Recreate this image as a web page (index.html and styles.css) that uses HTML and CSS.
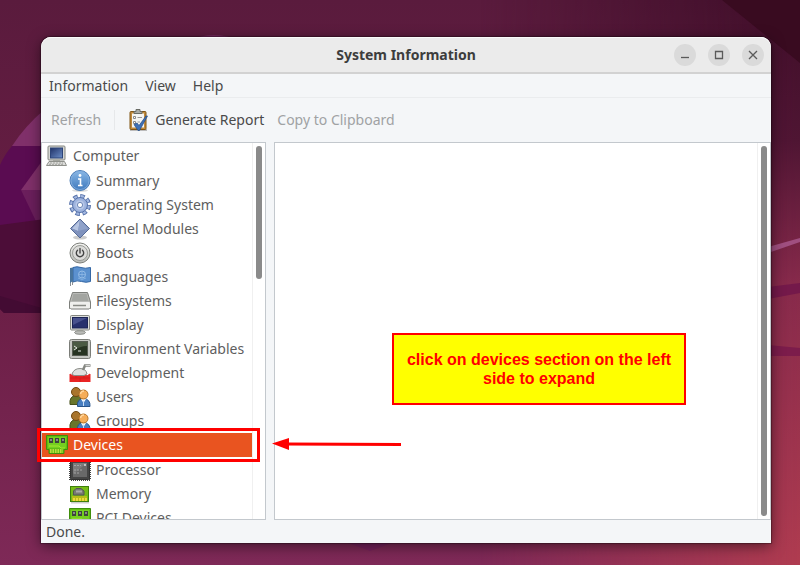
FILE: index.html
```html
<!DOCTYPE html>
<html lang="en">
<head>
  <meta charset="UTF-8">
  <meta name="viewport" content="width=device-width, initial-scale=1.0">
  <title>System Information</title>
  <link rel="stylesheet" href="styles.css">
</head>
<body>

  <!-- Wallpaper -->
  <svg class="wallpaper" viewBox="0 0 800 565" preserveAspectRatio="none" aria-hidden="true">
    <defs>
      <linearGradient id="wall" x1="0" y1="0" x2="0" y2="1">
        <stop offset="0" stop-color="#5a1b3d"/>
        <stop offset=".5" stop-color="#6a1e45"/>
        <stop offset="1" stop-color="#7e2957"/>
      </linearGradient>
      <linearGradient id="wallRight" x1="0" y1="0" x2="0" y2="1">
        <stop offset="0" stop-color="#3f0e29"/>
        <stop offset=".25" stop-color="#4f1533"/>
        <stop offset=".5" stop-color="#872a4b"/>
        <stop offset="1" stop-color="#b03c50"/>
      </linearGradient>
      <linearGradient id="fade">
        <stop offset=".6" stop-color="#fff" stop-opacity="0"/>
        <stop offset="1" stop-color="#fff"/>
      </linearGradient>
      <mask id="fadeMask"><rect width="800" height="565" fill="url(#fade)"/></mask>
    </defs>
    <rect width="800" height="565" fill="url(#wall)"/>
    <rect width="800" height="565" fill="url(#wallRight)" mask="url(#fadeMask)"/>
    <path d="M722 0L800 63V0z" fill="#390b20"/>
    <path d="M0 165Q5 154 12 146H60V240L0 226z" fill="#5a0c51"/>
    <path d="M12 146Q25 126 45 109V146z" fill="#80306a"/>
    <path d="M21 190L45 157V190z" fill="#80306a"/>
    <path d="M21 190H45V240z" fill="#6b1f5c"/>
    <path d="M0 225L45 219V313H4L0 309z" fill="#4c0d38"/>
    <path d="M0 296L45 309V313H4L0 309z" fill="#430b33"/>
    <path d="M190 40Q214 30 238 40z" fill="#75285e"/>
    <path d="M340 540L370 551L400 540z" fill="#76215c"/>
    <path d="M768 247L800 238V242L768 253z" fill="#a04f80"/>
    <path d="M768 287L800 283V293L768 299z" fill="#74194a"/>
    <path d="M768 345L800 348V356H768z" fill="#7c1c4b"/>
  </svg>

  <!-- Shared icons -->
  <svg class="sprite" aria-hidden="true">
    <defs>
      <linearGradient id="blue" x1="0" y1="0" x2="0" y2="1">
        <stop offset="0" stop-color="#8ab8e6"/><stop offset="1" stop-color="#3d78bd"/>
      </linearGradient>
      <linearGradient id="screen" x1="0" y1="0" x2="1" y2="1">
        <stop offset="0" stop-color="#203268"/><stop offset="1" stop-color="#6d8fc8"/>
      </linearGradient>
      <linearGradient id="silver" x1="0" y1="0" x2="0" y2="1">
        <stop offset="0" stop-color="#f5f5f3"/><stop offset="1" stop-color="#b6b8b3"/>
      </linearGradient>
    </defs>
    <symbol id="i-computer" viewBox="0 0 22 22">
      <rect x="2" y="1" width="17" height="14" rx="1" fill="#d5d6d2" stroke="#858781"/>
      <rect x="4.500" y="3" width="12" height="10" fill="url(#screen)" stroke="#2d4478"/>
      <path d="M7 15H14V17H7z" fill="#a4a6a0"/>
      <path d="M3 16.500H18.500L20.500 20.500H.500z" fill="#dcdcda" stroke="#8f918c"/>
      <path d="M4 18H17M3 19.300H18" stroke="#a4a6a0" stroke-dasharray="2 1"/>
    </symbol>
    <symbol id="i-summary" viewBox="0 0 22 22">
      <ellipse cx="11" cy="20.500" rx="8" ry="1.500" fill="#ddd"/>
      <circle cx="11" cy="10.500" r="10" fill="url(#blue)" stroke="#4a7db8"/>
      <circle cx="11" cy="10.500" r="9" fill="none" stroke="#86b0de" stroke-width=".8"/>
      <circle cx="11" cy="5.500" r="1.400" fill="#fff"/>
      <path d="M9 9H11.500V15.500M9 15.500H13.500" fill="none" stroke="#fff" stroke-width="1.600"/>
    </symbol>
    <symbol id="i-os" viewBox="0 0 22 22">
      <circle cx="11" cy="11" r="9" fill="none" stroke="#5873ab" stroke-width="4" stroke-dasharray="4.400 2.669"/>
      <circle cx="11" cy="11" r="8.500" fill="none" stroke="#a3b8e0" stroke-width="3" stroke-dasharray="2.700 3.976" stroke-dashoffset="-.700"/>
      <circle cx="11" cy="11" r="7.500" fill="#93abd8" stroke="#5873ab"/>
      <circle cx="11" cy="11" r="6.500" fill="#9fb4de"/>
      <circle cx="11" cy="11" r="4.500" fill="#b9c9e9"/>
      <circle cx="11" cy="11" r="2.600" fill="#fff" stroke="#6f88b8"/>
    </symbol>
    <symbol id="i-kernel" viewBox="0 0 22 22">
      <ellipse cx="11" cy="19.500" rx="7" ry="2" fill="#ccc"/>
      <path d="M11 1L20.500 10.500L11 20L1.500 10.500z" fill="#7f92bd" stroke="#566b97"/>
      <path d="M11 2L3 10.500L9 13z" fill="#b8c6e2"/>
      <path d="M11 2L9 13L19 10.500z" fill="#8fa2ca"/>
      <path d="M3 10.500L9 13L11 19z" fill="#8193bd"/>
    </symbol>
    <symbol id="i-boots" viewBox="0 0 22 22">
      <circle cx="11" cy="11" r="10" fill="url(#silver)" stroke="#7e807b"/>
      <circle cx="11" cy="11" r="7.500" fill="#dcdcda" stroke="#989a95"/>
      <path d="M8.500 8.300A3.700 3.700 0 1 0 13.500 8.300M11 6.500V11" fill="none" stroke="#444" stroke-width="1.400" stroke-linecap="round"/>
    </symbol>
    <symbol id="i-languages" viewBox="0 0 22 22">
      <path d="M1.500 2V20M3.500 2V19" stroke="#8b8f94"/>
      <path d="M4 1.500Q8 0 12 1.500T21.500 1.500V15.500Q17 17 12.500 15.500T4 16z" fill="#5b91cf" stroke="#3467a5"/>
      <path d="M1 2L4 1.500V15L1 17z" fill="#48759e"/>
      <circle cx="13" cy="8.500" r="3.500" fill="none" stroke="#94bce6"/>
      <path d="M9.500 8.500H16.500M13 5V12M9 12Q13 15 17 12" fill="none" stroke="#94bce6" stroke-width=".7"/>
    </symbol>
    <symbol id="i-files" viewBox="0 0 22 22">
      <path d="M3.500 2.500H18.500L21.500 12V18.500H.500V12z" fill="#b9bab7" stroke="#7d7f7b" stroke-linejoin="round"/>
      <path d="M4.500 4H17.500L19.500 11H2.500z" fill="#a3a5a1"/>
      <rect x="1" y="12" width="20" height="6.500" rx="1" fill="#efefed"/>
      <path d="M4 15.500H17" stroke="#898b86" stroke-width="1.500"/>
      <path d="M2 19.500H20" stroke="#bbb"/>
    </symbol>
    <symbol id="i-display" viewBox="0 0 22 22">
      <ellipse cx="11" cy="18.500" rx="5.500" ry="1.800" fill="#babbb8" stroke="#8b8d88"/>
      <path d="M8 15H14V18H8z" fill="#aaaca7"/>
      <rect x="1.500" y="1.500" width="19" height="14.500" rx="1" fill="#dddedb" stroke="#858781"/>
      <rect x="3.500" y="3.500" width="15" height="10.500" fill="#27306d" stroke="#1c2455"/>
      <path d="M4 4H18L4 11z" fill="#48518d"/>
    </symbol>
    <symbol id="i-env" viewBox="0 0 22 22">
      <rect x=".500" y="1.500" width="21" height="19" rx="2" fill="#c5c7c2" stroke="#7b7d78"/>
      <rect x="3.500" y="3.500" width="15" height="14" fill="#273422" stroke="#555b51"/>
      <path d="M4 4H18V8Q11 8 4 13z" fill="#4a5a43"/>
      <path d="M5 8L8 10L5 12M9 13H12" fill="none" stroke="#e4e8e2"/>
    </symbol>
    <symbol id="i-dev" viewBox="0 0 22 22">
      <path d="M.500 12H21.500V20H.500z" fill="#e92424"/>
      <path d="M1 16H21M7 12V16M15 12V16M11 16V20" stroke="#d51c1c"/>
      <path d="M1 12L4 14L7 12H15L18 14L21 12" fill="#fff" stroke="#e02424"/>
      <path d="M3 12Q5 6.500 11 6.500T18 12L15 13.500H5z" fill="#dfe0de" stroke="#8b8d88"/>
      <path d="M14 8L16 3.500H21.500" fill="none" stroke="#858782" stroke-width="2.500"/>
      <path d="M16.500 3.500H21" stroke="#d5d6d4"/>
    </symbol>
    <symbol id="i-users" viewBox="0 0 22 22">
      <path d="M1 18.500Q0 10 7 9.500Q13 10 12.500 18.500z" fill="#68752b" stroke="#47501b"/>
      <circle cx="7" cy="6" r="4.500" fill="#a9752c" stroke="#704811"/>
      <path d="M8.500 20.500Q7.500 13 14.500 12.500Q21.500 13 21 20.500z" fill="#487ec0" stroke="#28548a"/>
      <path d="M12 13L14.500 17L17 13z" fill="#fff"/>
      <path d="M14.500 14.500V20" stroke="#c6dcf3"/>
      <circle cx="14.500" cy="8.500" r="4.500" fill="#f5ad59" stroke="#b77426"/>
      <path d="M11.500 8Q12 5 15 5" fill="none" stroke="#ffd59b" stroke-width="1.500"/>
    </symbol>
    <symbol id="i-card" viewBox="0 0 22 22">
      <path d="M.500 1.500H21.500V15.500H18V19.500H3V15.500H.500z" fill="#60bf13" stroke="#3f8f0c"/>
      <path d="M2 3H20V14H2z" fill="#75cf20"/>
      <path d="M3 4H7V9H3zM9 4H13V9H9zM15 4H19V9H15z" fill="#3d443d"/>
      <path d="M4 5H6V7H4zM10 5H12V7H10zM16 5H18V7H16z" fill="#878b87"/>
      <path d="M3 12H13L15 14H19" fill="none" stroke="#a8e92e"/>
      <path d="M4 17H17" stroke="#b8dd3e" stroke-width="4" stroke-dasharray="1.500 1"/>
    </symbol>
    <symbol id="i-cpu" viewBox="0 0 22 22">
      <rect x="1" y="1" width="20" height="20" fill="none" stroke="#444" stroke-width="2" stroke-dasharray="1 1"/>
      <rect x="1.500" y="1.500" width="19" height="19" rx="1" fill="#454545" stroke="#333"/>
      <rect x="4" y="4" width="14" height="14" fill="#696969"/>
      <path d="M4 4H18L4 15z" fill="#7c7c7c"/>
      <path d="M5 6.500H12M5 11H14M5 14H11" stroke="#a5a5a5" stroke-dasharray="2 1"/>
      <circle cx="16" cy="6" r="1" fill="#ddd"/>
    </symbol>
    <symbol id="i-memory" viewBox="0 0 22 22">
      <path d="M2 19.500H20" stroke="#ccc" stroke-width="2"/>
      <rect x="1.500" y="3.500" width="18" height="15" fill="#75bd16" stroke="#3f7f0c"/>
      <path d="M3 13H18V18H3z" fill="#b7bd19"/>
      <path d="M5 15V18M8 15V18M11 15V18M14 15V18M17 15V18" stroke="#ffe348" stroke-width="1.500"/>
      <path d="M4.500 12V8L7 5.500H12L15 8V12z" fill="#777b72" stroke="#555"/>
      <path d="M7 8.500H13" stroke="#aaa" stroke-width="2"/>
    </symbol>
  </svg>

  <main class="window">
    <header class="titlebar">
      <h1>System Information</h1>
      <div class="window-buttons">
        <button type="button" aria-label="Minimize"><svg viewBox="0 0 22 22"><path d="M7 13.500H15"/></svg></button>
        <button type="button" aria-label="Maximize"><svg viewBox="0 0 22 22"><path d="M7.500 7.500H14.500V14.500H7.500z"/></svg></button>
        <button type="button" aria-label="Close"><svg viewBox="0 0 22 22"><path d="M7 7L15 15M15 7L7 15"/></svg></button>
      </div>
    </header>

    <nav class="menubar">
      <button type="button">Information</button>
      <button type="button">View</button>
      <button type="button">Help</button>
    </nav>

    <div class="toolbar">
      <button type="button" disabled>Refresh</button>
      <span class="separator"></span>
      <button type="button">
        <svg class="icon" viewBox="0 0 22 22" aria-hidden="true">
          <path d="M2 21H19" stroke="#bbb" stroke-width="2"/>
          <rect x="2" y="2.500" width="16" height="18" rx="1" fill="#c28b3d" stroke="#805617"/>
          <path d="M4 4.500H16V18.500H4z" fill="#f5f5f3"/>
          <path d="M6 4.500V2.500H8V.500H12V2.500H14V4.500z" fill="#aaaca7" stroke="#686b65"/>
          <path d="M5.500 7.500H7.500V9.500H5.500zM5.500 12.500H7.500V14.500H5.500z" fill="#fff" stroke="#888"/>
          <path d="M9.500 8.500H14M9.500 13H12" stroke="#999"/>
          <path d="M6 15.500L9 14L11 16.500L18 7H19.500L11.500 21.500H10z" fill="#3f70b5" stroke="#224b83" stroke-width=".7"/>
        </svg>
        Generate Report
      </button>
      <button type="button" disabled>Copy to Clipboard</button>
    </div>

    <div class="panes">
      <aside class="pane sidebar">
        <ul class="tree">
          <li>
            <a href="#"><svg class="icon"><use href="#i-computer"/></svg>Computer</a>
            <ul>
              <li><a href="#"><svg class="icon"><use href="#i-summary"/></svg>Summary</a></li>
              <li><a href="#"><svg class="icon"><use href="#i-os"/></svg>Operating System</a></li>
              <li><a href="#"><svg class="icon"><use href="#i-kernel"/></svg>Kernel Modules</a></li>
              <li><a href="#"><svg class="icon"><use href="#i-boots"/></svg>Boots</a></li>
              <li><a href="#"><svg class="icon"><use href="#i-languages"/></svg>Languages</a></li>
              <li><a href="#"><svg class="icon"><use href="#i-files"/></svg>Filesystems</a></li>
              <li><a href="#"><svg class="icon"><use href="#i-display"/></svg>Display</a></li>
              <li><a href="#"><svg class="icon"><use href="#i-env"/></svg>Environment Variables</a></li>
              <li><a href="#"><svg class="icon"><use href="#i-dev"/></svg>Development</a></li>
              <li><a href="#"><svg class="icon"><use href="#i-users"/></svg>Users</a></li>
              <li><a href="#"><svg class="icon"><use href="#i-users"/></svg>Groups</a></li>
            </ul>
          </li>
          <li>
            <a href="#" class="selected"><svg class="icon"><use href="#i-card"/></svg>Devices</a>
            <ul>
              <li><a href="#"><svg class="icon"><use href="#i-cpu"/></svg>Processor</a></li>
              <li><a href="#"><svg class="icon"><use href="#i-memory"/></svg>Memory</a></li>
              <li><a href="#"><svg class="icon"><use href="#i-card"/></svg>PCI Devices</a></li>
            </ul>
          </li>
        </ul>
        <div class="scrollbar"><div class="thumb thumb-short"></div></div>
      </aside>
      <section class="pane details">
        <div class="scrollbar"><div class="thumb"></div></div>
      </section>
    </div>

    <footer class="statusbar">Done.</footer>

    <!-- Annotations over the window -->
    <div class="ring"></div>
    <svg class="arrow" viewBox="0 0 130 12" aria-hidden="true">
      <path d="M14 6L129 6.500" stroke="#f00" stroke-width="3"/>
      <path d="M0 5.500L17 0V12z" fill="#f00"/>
    </svg>
    <p class="callout">click on devices section on the left side to expand</p>
  </main>

</body>
</html>
```

FILE: styles.css
```css
* {
  box-sizing: border-box;
}

body {
  margin: 0;
  height: 100vh;
  padding: 37px 29px 22px 41px;
  display: flex;
  overflow: hidden;
  background: #6a1e45;
  color: #4a4a4a;
  font-family: "Noto Sans", sans-serif;
  font-size: 14px;
  line-height: 20px;
}

button {
  padding: 0;
  border: none;
  background: none;
  color: inherit;
  font: inherit;
}

.wallpaper {
  position: absolute;
  top: 0;
  left: 0;
  z-index: -1;
  width: 100%;
  height: 100%;
}

.sprite {
  position: absolute;
  width: 0;
  height: 0;
}

.icon {
  flex: none;
  width: 22px;
  height: 22px;
}

/* Window */
.window {
  position: relative;
  flex: 1;
  min-width: 0;
  display: flex;
  flex-direction: column;
  border-radius: 10px 10px 0 0;
  background: #f4f6f8;
  box-shadow: 0 0 1px 1px rgba(0, 0, 0, 0.3), 0 3px 14px rgba(0, 0, 0, 0.5);
}

.titlebar {
  display: grid;
  grid-template-columns: 1fr auto 1fr;
  align-items: center;
  height: 37px;
  padding: 0 7px;
  border-bottom: 2px solid #d2d2d2;
  border-radius: 10px 10px 0 0;
  background: #ebebeb;
  box-shadow: inset 0 1px #fafafa;
}

.titlebar h1 {
  grid-column: 2;
  margin: 0;
  color: #3d3d3d;
  font-size: 14px;
  font-weight: bold;
}

.window-buttons {
  justify-self: end;
  display: flex;
  gap: 12px;
}

.window-buttons button {
  width: 22px;
  height: 22px;
  border-radius: 50%;
  background: #dadada;
}

.window-buttons svg {
  display: block;
  fill: none;
  stroke: #5a5a5a;
  stroke-width: 1.3;
}

.menubar {
  display: flex;
  align-items: center;
  gap: 17px;
  height: 24px;
  padding: 0 8px;
  border-bottom: 1px solid #eaecee;
}

.toolbar {
  display: flex;
  align-items: center;
  height: 44px;
  padding: 0 10px;
  gap: 13px;
}

.toolbar button {
  display: flex;
  align-items: center;
  gap: 5px;
}

.toolbar button:disabled {
  color: #a0a2a4;
}

.separator {
  width: 1px;
  height: 20px;
  background: #e6e8ea;
}

/* Panes */
.panes {
  flex: 1;
  min-height: 0;
  display: flex;
  gap: 8px;
}

.pane {
  display: flex;
  overflow: hidden;
  border: 1px solid #c3c8cd;
  background: #fff;
}

.sidebar {
  flex: none;
  width: 225px;
}

.details {
  flex: 1;
  justify-content: flex-end;
}

.scrollbar {
  flex: none;
  width: 13px;
  padding: 3px;
  border-left: 1px solid #f0f0f0;
}

.thumb {
  width: 6px;
  height: 100%;
  border-radius: 3px;
  background: #8a8a8a;
}

.thumb-short {
  height: 36%;
}

.tree,
.tree ul {
  margin: 0;
  padding: 1px 0 0;
  list-style: none;
}

.tree {
  flex: 1;
  min-width: 0;
}

.tree a {
  display: flex;
  align-items: center;
  gap: 5px;
  height: 24px;
  padding-left: 4px;
  color: #5e5e5e;
  text-decoration: none;
  white-space: nowrap;
}

.tree ul a {
  padding-left: 27px;
}

.tree .selected {
  background: #e95420;
  color: #fff;
}

.statusbar {
  height: 23px;
  padding: 2px 5px;
}

/* Annotations */
.ring {
  position: absolute;
  top: 391px;
  left: -4px;
  width: 223px;
  height: 34px;
  border: 3px solid #f00;
}

.arrow {
  position: absolute;
  top: 401px;
  left: 231px;
  width: 130px;
  height: 12px;
}

.callout {
  position: absolute;
  top: 296px;
  left: 351px;
  width: 294px;
  height: 72px;
  margin: 0;
  padding: 15px 8px;
  border: 2px solid #f00;
  background: #ff0;
  color: #f00;
  font-family: "Liberation Sans", sans-serif;
  font-size: 16px;
  font-weight: bold;
  line-height: 19px;
  text-align: center;
}
```
